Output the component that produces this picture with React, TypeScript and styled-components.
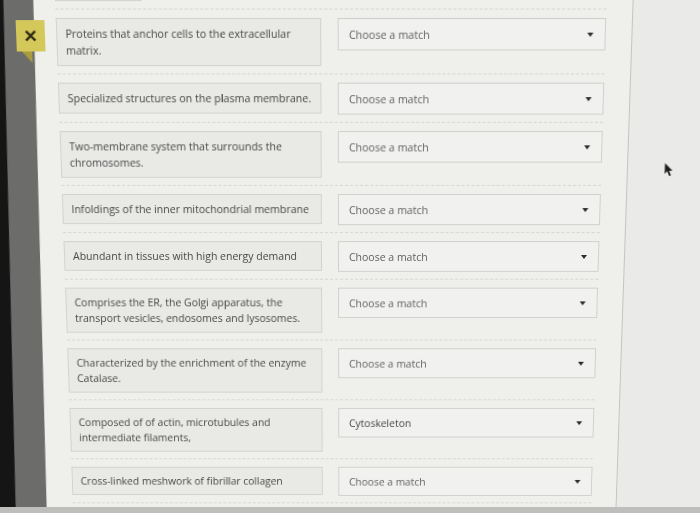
import styled, { createGlobalStyle } from 'styled-components'

const GlobalStyle = createGlobalStyle`
  html, body {
    margin: 0;
    padding: 0;
    height: 100%;
    overflow: hidden;
    background: #bebebc;
  }
  #root {
    height: 100%;
  }
`

const Viewport = styled.div`
  width: 700px;
  height: 513px;
  overflow: hidden;
  background: #bebebc;
`

// the photo is taken at a slight angle, so the whole screen is tilted
const Screen = styled.div`
  width: 760px;
  height: 517px;
  margin-left: -30px;
  display: flex;
  transform-origin: 380px 256px;
  transform: perspective(1000px) rotateX(-7deg);
  font-family: 'Open Sans', 'Liberation Sans', sans-serif;
`

// dark bezel and grey nav strip, both a little skewed in the photo
const Sidebar = styled.div`
  position: relative;
  flex: none;
  width: 73px;
  background: #efefec;

  &::before,
  &::after {
    content: '';
    position: absolute;
    inset: 0;
  }
  &::before {
    background: #6c6c6a;
    clip-path: polygon(0 0, 73px 0, 67px 100%, 0 100%);
  }
  &::after {
    background: #151515;
    clip-path: polygon(0 0, 44px 0, 35px 100%, 0 100%);
  }
`

const Panel = styled.div`
  flex: none;
  width: 582px;
  box-sizing: border-box;
  padding: 0 25px 0 21px;
  background: #efefec;
  border-right: 1px solid #c4c4c2;
`

// bottom edge of the row scrolled above the top of the screen
const PrevEdge = styled.div`
  width: 82px;
  height: 6px;
  margin-bottom: 7px;
  background: #e9e9e6;
  border: 1px solid #d2d2d0;
  border-top: none;
`

const List = styled.div`
  display: flex;
  flex-direction: column;
  border-top: 1px dashed #d5d5d3;
`

const Row = styled.div`
  position: relative;
  display: grid;
  grid-template-columns: 258px 261px;
  column-gap: 16px;
  align-items: start;
  padding: 8px 0 7px;
  border-bottom: 1px dashed #d5d5d3;
`

const Prompt = styled.div`
  box-sizing: border-box;
  padding: 6px 5px 6px 8px;
  background: #e9e9e6;
  border: 1px solid #d2d2d0;
  color: #474747;
  font-size: 10.5px;
  line-height: 16px;
`

const SelectBox = styled.div<{ $filled: boolean }>`
  box-sizing: border-box;
  height: 31px;
  display: flex;
  align-items: center;
  justify-content: space-between;
  padding: 0 11px 0 10px;
  background: #f1f1ef;
  border: 1px solid #d0d0ce;
  color: ${(p) => (p.$filled ? '#464646' : '#616161')};
  font-size: 10.5px;
`

const Caret = styled.span`
  width: 0;
  height: 0;
  border-left: 3px solid transparent;
  border-right: 3px solid transparent;
  border-top: 4px solid #2a2a2a;
`

const WrongBadge = styled.div`
  position: absolute;
  left: -39px;
  top: 10px;
  z-index: 1;
  width: 28px;
  height: 30px;
  display: flex;
  align-items: center;
  justify-content: center;
  background: #d5c85b;

  &::after {
    content: '';
    position: absolute;
    left: 5px;
    top: 30px;
    width: 0;
    height: 0;
    border-top: 11px solid #a99c3e;
    border-left: 10px solid transparent;
  }
`

const Blank = styled.div`
  position: relative;
  flex: 1;
  background: #eaeae8;
`

const Pointer = styled.svg`
  position: absolute;
  left: 36px;
  top: 163px;
`

type Item = {
  prompt: string
  value?: string
  wrong?: boolean
}

const items: Item[] = [
  { prompt: 'Proteins that anchor cells to the extracellular matrix.', wrong: true },
  { prompt: 'Specialized structures on the plasma membrane.' },
  { prompt: 'Two-membrane system that surrounds the chromosomes.' },
  { prompt: 'Infoldings of the inner mitochondrial membrane' },
  { prompt: 'Abundant in tissues with high energy demand' },
  { prompt: 'Comprises the ER, the Golgi apparatus, the transport vesicles, endosomes and lysosomes.' },
  { prompt: 'Characterized by the enrichment of the enzyme Catalase.' },
  { prompt: 'Composed of of actin, microtubules and intermediate filaments,', value: 'Cytoskeleton' },
  { prompt: 'Cross-linked meshwork of fibrillar collagen' },
]

export default function App() {
  return (
    <>
      <GlobalStyle />
      <Viewport>
        <Screen>
          <Sidebar />
          <Panel>
            <PrevEdge />
            <List>
              {items.map((item) => (
                <Row key={item.prompt}>
                  {item.wrong && (
                    <WrongBadge>
                      <svg width="12" height="12" viewBox="0 0 12 12">
                        <path d="M1.5 1.5 L10.5 10.5 M10.5 1.5 L1.5 10.5" stroke="#2c2914" strokeWidth="2.4" />
                      </svg>
                    </WrongBadge>
                  )}
                  <Prompt>{item.prompt}</Prompt>
                  <SelectBox $filled={!!item.value}>
                    <span>{item.value ?? 'Choose a match'}</span>
                    <Caret />
                  </SelectBox>
                </Row>
              ))}
            </List>
          </Panel>
          <Blank>
            <Pointer width="9" height="14" viewBox="0 0 9 14">
              <path d="M0.5 0.5 L0.5 11 L3 8.6 L5 13.2 L6.8 12.4 L4.8 7.9 L8.2 7.9 Z" fill="#1e1e1e" />
            </Pointer>
          </Blank>
        </Screen>
      </Viewport>
    </>
  )
}
